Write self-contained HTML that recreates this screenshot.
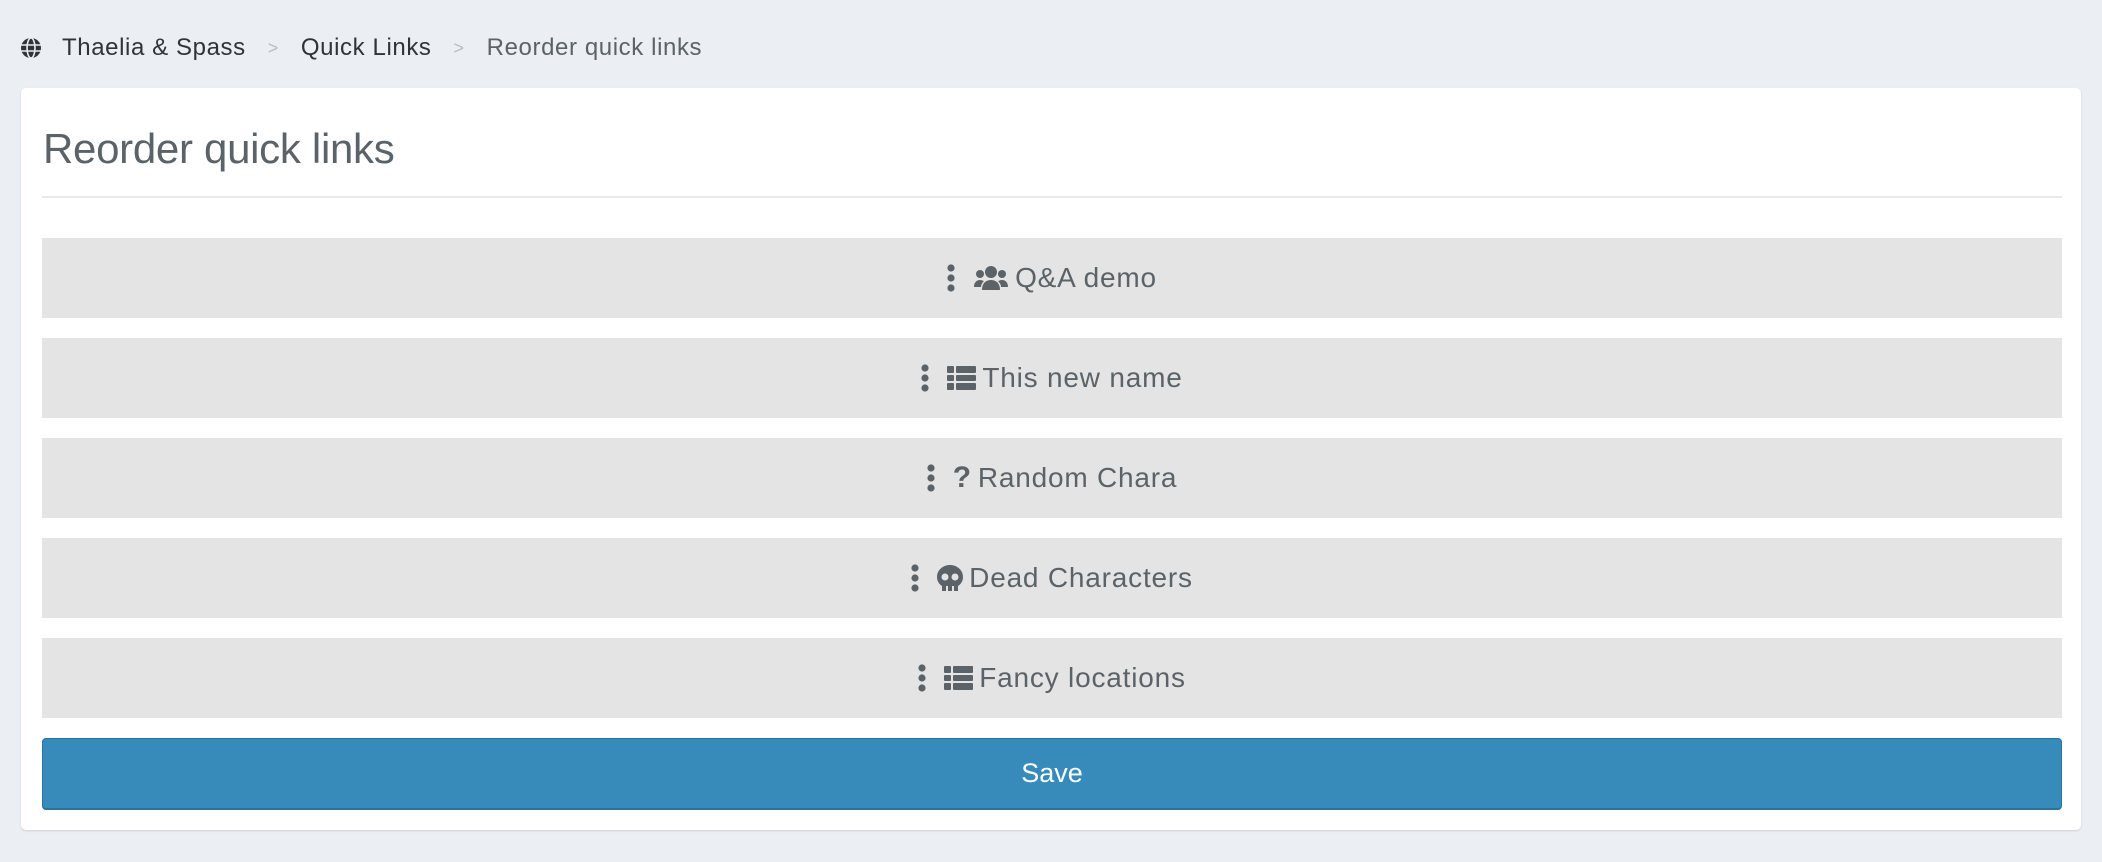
<!DOCTYPE html>
<html><head><meta charset="utf-8"><style>
html,body{margin:0;padding:0;}
body{width:2102px;height:862px;background:#ebeef3;font-family:"Liberation Sans",sans-serif;position:relative;overflow:hidden;}
.bc{position:absolute;top:33px;left:20px;height:30px;display:flex;align-items:center;font-size:24px;color:#2f3438;letter-spacing:0.6px;}
.bc .sep{color:#b9bcbf;margin:0 22px;font-size:18px;}
.bc .cur{color:#5b6368;}
.card{position:absolute;left:21px;top:88px;width:2060px;height:742px;background:#fff;border-radius:5px;box-shadow:0 1px 2px rgba(0,0,0,.12);}
h1{position:absolute;left:22px;top:37px;margin:0;font-weight:normal;font-size:42px;color:#5b6368;letter-spacing:-0.3px;}
.hr{position:absolute;left:21px;width:2020px;top:108px;height:2px;background:#e8eaec;}
.row{position:absolute;left:21px;width:2020px;height:80px;background:#e4e4e4;display:flex;align-items:center;justify-content:center;font-size:28px;color:#5b6368;letter-spacing:0.8px;}
.row svg{fill:#5b6368;}
.dots{margin-right:18px;}
.ic{margin-right:6px;}
.btn{position:absolute;left:21px;width:2018px;top:650px;height:69px;background:#368bbb;border:1px solid #2b719a;border-bottom-width:2px;border-radius:4px;color:#fff;font-size:27px;display:flex;align-items:center;justify-content:center;}
</style></head><body>
<div class="bc">
<svg width="22" height="22" viewBox="0 0 22 22" style="margin-right:20px"><circle cx="11" cy="11" r="10" fill="#2f3438"/><g stroke="#ebeef3" stroke-width="1.6" fill="none"><ellipse cx="11" cy="11" rx="4" ry="10"/><line x1="1" y1="8" x2="21" y2="8"/><line x1="1" y1="14" x2="21" y2="14"/></g></svg>
<span>Thaelia &amp; Spass</span><span class="sep">&gt;</span><span>Quick Links</span><span class="sep">&gt;</span><span class="cur">Reorder quick links</span>
</div>
<div class="card">
<h1>Reorder quick links</h1>
<div class="hr"></div>
<div class="row" style="top:150px"><svg class="dots" width="8" height="28" viewBox="0 0 8 28"><circle cx="4" cy="4" r="3.6"/><circle cx="4" cy="14" r="3.6"/><circle cx="4" cy="24" r="3.6"/></svg><svg class="ic" width="36" height="26" viewBox="0 0 36 26"><circle cx="18" cy="7" r="6"/><circle cx="7" cy="9" r="4"/><circle cx="29" cy="9" r="4"/><path d="M9 25c0-7 4-10 9-10s9 3 9 10z"/><path d="M1 22c0-5 3-7 6-7 2 0 3 1 4 1-2 2-3 4-3 6z"/><path d="M35 22c0-5-3-7-6-7-2 0-3 1-4 1 2 2 3 4 3 6z"/></svg>Q&amp;A demo</div>
<div class="row" style="top:250px"><svg class="dots" width="8" height="28" viewBox="0 0 8 28"><circle cx="4" cy="4" r="3.6"/><circle cx="4" cy="14" r="3.6"/><circle cx="4" cy="24" r="3.6"/></svg><svg class="ic" width="29" height="24" viewBox="0 0 29 24"><rect x="0" y="0" width="7" height="7" rx="1"/><rect x="9" y="0" width="20" height="7" rx="1"/><rect x="0" y="9" width="7" height="6" rx="1"/><rect x="9" y="9" width="20" height="6" rx="1"/><rect x="0" y="17" width="7" height="7" rx="1"/><rect x="9" y="17" width="20" height="7" rx="1"/></svg>This new name</div>
<div class="row" style="top:350px"><svg class="dots" width="8" height="28" viewBox="0 0 8 28"><circle cx="4" cy="4" r="3.6"/><circle cx="4" cy="14" r="3.6"/><circle cx="4" cy="24" r="3.6"/></svg><span class="ic" style="font-weight:bold;font-size:30px;">?</span>Random Chara</div>
<div class="row" style="top:450px"><svg class="dots" width="8" height="28" viewBox="0 0 8 28"><circle cx="4" cy="4" r="3.6"/><circle cx="4" cy="14" r="3.6"/><circle cx="4" cy="24" r="3.6"/></svg><svg class="ic" width="26" height="26" viewBox="0 0 26 26"><path d="M13 0C6 0 0 5 0 12c0 4 2 7 5 9v5h16v-5c3-2 5-5 5-9C26 5 20 0 13 0z"/><circle cx="8" cy="12" r="3.5" fill="#e4e4e4"/><circle cx="18" cy="12" r="3.5" fill="#e4e4e4"/><rect x="9" y="21" width="2" height="5" fill="#e4e4e4"/><rect x="15" y="21" width="2" height="5" fill="#e4e4e4"/></svg>Dead Characters</div>
<div class="row" style="top:550px"><svg class="dots" width="8" height="28" viewBox="0 0 8 28"><circle cx="4" cy="4" r="3.6"/><circle cx="4" cy="14" r="3.6"/><circle cx="4" cy="24" r="3.6"/></svg><svg class="ic" width="29" height="24" viewBox="0 0 29 24"><rect x="0" y="0" width="7" height="7" rx="1"/><rect x="9" y="0" width="20" height="7" rx="1"/><rect x="0" y="9" width="7" height="6" rx="1"/><rect x="9" y="9" width="20" height="6" rx="1"/><rect x="0" y="17" width="7" height="7" rx="1"/><rect x="9" y="17" width="20" height="7" rx="1"/></svg>Fancy locations</div>
<div class="btn">Save</div>
</div>
</body></html>
